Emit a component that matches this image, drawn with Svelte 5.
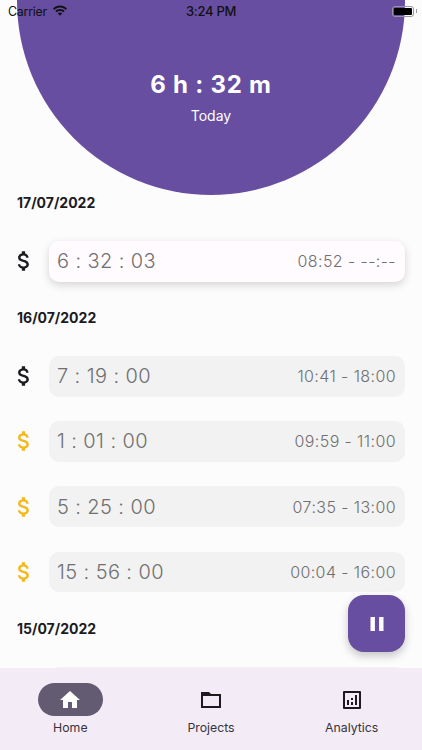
<script>
  const days = [
    {
      date: '17/07/2022',
      entries: [{ total: '6 : 32 : 03', range: '08:52 - --:--', active: true }]
    },
    {
      date: '16/07/2022',
      entries: [
        { total: '7 : 19 : 00', range: '10:41 - 18:00' },
        { total: '1 : 01 : 00', range: '09:59 - 11:00', paid: true },
        { total: '5 : 25 : 00', range: '07:35 - 13:00', paid: true },
        { total: '15 : 56 : 00', range: '00:04 - 16:00', paid: true }
      ]
    },
    {
      // only the top edge of this card shows above the nav
      date: '15/07/2022',
      entries: [{ total: '', range: '' }]
    }
  ]
</script>

<div class="screen">
  <div class="status">
    <div class="status-left">
      <span>Carrier</span>
      <svg width="16" height="12" viewBox="0 0 16 12">
        <path d="M8 2.600c2.200 0 4.200.9 5.700 2.300l1.300-1.400C13.200 1.700 10.700.6 8 .6S2.800 1.700 1 3.500l1.300 1.400C3.800 3.500 5.800 2.600 8 2.600z" fill="#111" />
        <path d="M8 6c1.300 0 2.500.5 3.400 1.300l1.300-1.400C11.400 4.700 9.800 4 8 4s-3.400.7-4.700 1.900l1.300 1.400C5.500 6.500 6.700 6 8 6z" fill="#111" />
        <path d="M8 7.400c-.9 0-1.700.3-2.300.9L8 10.800l2.300-2.500c-.6-.6-1.400-.9-2.300-.9z" fill="#111" />
      </svg>
    </div>
    <span class="clock">3:24 PM</span>
    <div class="battery"><i></i></div>
  </div>

  <div class="hero">
    <div class="hero-total">6 h : 32 m</div>
    <div class="hero-label">Today</div>
  </div>

  <div class="list">
    {#each days as day}
      <div class="date">{day.date}</div>
      {#each day.entries as entry}
        <div class="row">
          <svg class="dollar" class:paid={entry.paid} width="26" height="26" viewBox="0 0 24 24">
            <path d="M11.800 10.900c-2.270-.59-3-1.200-3-2.150 0-1.090 1.010-1.850 2.700-1.850 1.780 0 2.440.85 2.500 2.100h2.210c-.07-1.720-1.120-3.300-3.210-3.810V3h-3v2.160c-1.940.42-3.500 1.680-3.500 3.610 0 2.310 1.910 3.460 4.700 4.130 2.500.6 3 1.480 3 2.410 0 .69-.49 1.790-2.700 1.790-2.060 0-2.870-.92-2.980-2.100h-2.200c.12 2.190 1.760 3.420 3.680 3.830V21h3v-2.150c1.950-.37 3.500-1.500 3.500-3.550 0-2.840-2.430-3.810-4.700-4.400z" />
          </svg>
          <div class="card" class:active={entry.active}>
            <span class="total">{entry.total}</span>
            <span class="range">{entry.range}</span>
          </div>
        </div>
      {/each}
    {/each}
  </div>

  <button class="fab" aria-label="Pause">
    <svg width="14" height="14" viewBox="0 0 14 14"><path d="M0.500 0h4.400v14H0.500zM9.100 0h4.400v14H9.100z" fill="#fff" /></svg>
  </button>

  <nav class="nav">
    <div class="tab">
      <div class="pill">
        <svg width="24" height="24" viewBox="0 0 24 24"><path d="M10 20v-6h4v6h5v-8h3L12 3 2 12h3v8z" fill="#fff" /></svg>
      </div>
      <span>Home</span>
    </div>
    <div class="tab">
      <div class="pill">
        <svg width="24" height="24" viewBox="0 0 24 24"><path fill-rule="evenodd" d="M10 4H2v16h20V6H12l-2-2zM4 8h16v10H4z" fill="#1d1b20" /></svg>
      </div>
      <span>Projects</span>
    </div>
    <div class="tab">
      <div class="pill">
        <svg width="24" height="24" viewBox="0 0 24 24"><path d="M20 3H4a1 1 0 0 0-1 1v16a1 1 0 0 0 1 1h16a1 1 0 0 0 1-1V4a1 1 0 0 0-1-1zm-1 16H5V5h14zM7 12h2v5H7zm8-5h2v10h-2zm-4 7h2v3h-2zm0-4h2v2h-2z" fill="#1d1b20" /></svg>
      </div>
      <span>Analytics</span>
    </div>
  </nav>
</div>

<style>
  :global(body) {
    margin: 0;
  }

  .screen {
    position: relative;
    width: 422px;
    height: 750px;
    display: flex;
    flex-direction: column;
    overflow: hidden;
    background: #fcfcfc;
    font-family: Inter, 'Liberation Sans', sans-serif;
  }

  .status {
    position: absolute;
    top: 0;
    left: 0;
    right: 0;
    height: 22px;
    padding: 0 8px;
    display: grid;
    grid-template-columns: 1fr auto 1fr;
    align-items: center;
    font-size: 12.500px;
    color: #111;
  }

  .status-left {
    display: flex;
    align-items: center;
    gap: 5px;
    letter-spacing: -0.3px;
  }

  .clock {
    font-size: 13px;
    font-weight: 500;
    letter-spacing: -0.3px;
  }

  .battery {
    position: relative;
    justify-self: end;
    width: 22px;
    height: 11px;
    padding: 1px;
    box-sizing: border-box;
    border: 1px solid #9a93ad;
    border-radius: 3px;
  }

  .battery::after {
    content: '';
    position: absolute;
    right: -4px;
    top: 2px;
    width: 1.500px;
    height: 4px;
    background: #9a9a9a;
  }

  .battery i {
    display: block;
    height: 100%;
    background: #000;
    border-radius: 1px;
  }

  .hero {
    flex: none;
    height: 195px;
    margin: 0 17px;
    border-radius: 0 0 194px 194px;
    background: #674ea1;
    color: #fff;
    display: flex;
    flex-direction: column;
    align-items: center;
    padding-top: 69px;
    box-sizing: border-box;
  }

  .hero-total {
    font-size: 24px;
    line-height: 32px;
    font-weight: 700;
    letter-spacing: 0.75px;
  }

  .hero-label {
    margin-top: 5px;
    font-size: 14px;
    line-height: 20px;
  }

  .list {
    flex: 1;
    min-height: 0;
    overflow: hidden;
    padding: 0 17px;
  }

  .date {
    margin-top: 28.500px;
    font-size: 14px;
    line-height: 16px;
    font-weight: 700;
    color: #1b1b1f;
  }

  .date:first-child {
    margin-top: 0;
  }

  .date + .row {
    margin-top: 30px;
  }

  .row {
    display: flex;
    align-items: center;
    gap: 12px;
    margin-top: 24.700px;
  }

  .dollar {
    flex: none;
    margin-left: -6px;
    fill: #1b1b1f;
  }

  .dollar.paid {
    fill: #f4b81c;
  }

  .card {
    flex: 1;
    height: 40.500px;
    padding: 0 9px 0 8px;
    display: flex;
    align-items: center;
    justify-content: space-between;
    border-radius: 10px;
    background: #f2f2f2;
    color: #707070;
    font-weight: 300;
  }

  .card.active {
    background: #fffbfe;
    box-shadow: 0 3px 8px rgba(0, 0, 0, 0.16);
  }

  .total {
    font-size: 20px;
    letter-spacing: 0.4px;
  }

  .range {
    font-size: 16px;
    letter-spacing: 0.4px;
  }

  .fab {
    position: absolute;
    right: 17px;
    top: 595px;
    width: 57px;
    height: 57px;
    border: none;
    border-radius: 16px;
    background: #674ea1;
    box-shadow: 0 4px 8px rgba(0, 0, 0, 0.22);
    display: flex;
    align-items: center;
    justify-content: center;
  }

  .nav {
    flex: none;
    height: 82px;
    background: #f3ecf7;
    display: grid;
    grid-template-columns: repeat(3, 1fr);
    justify-items: center;
    padding-top: 15px;
    box-sizing: border-box;
  }

  .tab {
    display: flex;
    flex-direction: column;
    align-items: center;
    font-size: 12.300px;
    color: #36333c;
  }

  .tab span {
    margin-top: 2px;
    line-height: 20px;
  }

  .pill {
    width: 65px;
    height: 33px;
    border-radius: 17px;
    display: flex;
    align-items: center;
    justify-content: center;
  }

  .tab:first-child .pill {
    background: #625b71;
  }
</style>
